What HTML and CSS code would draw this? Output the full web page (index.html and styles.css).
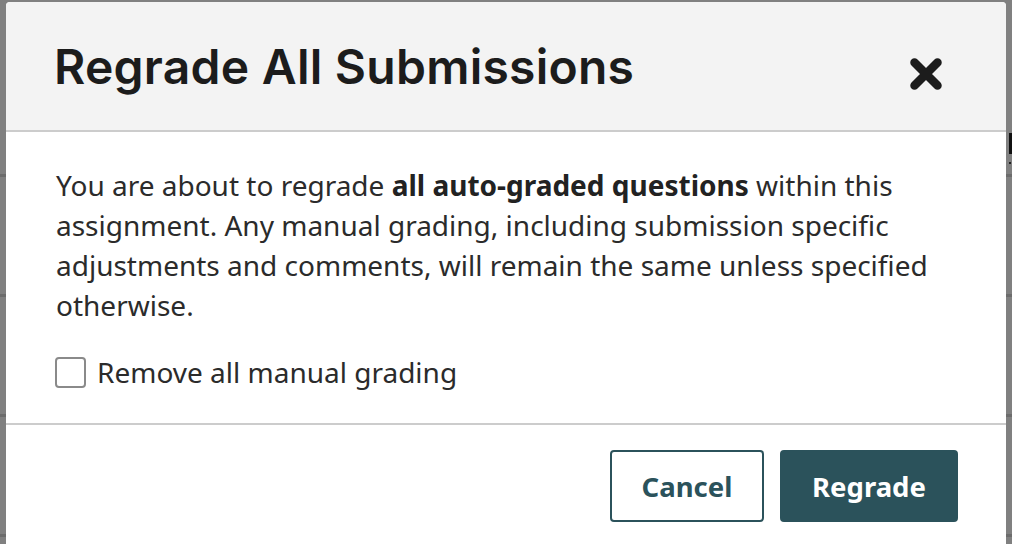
FILE: index.html
```html
<!DOCTYPE html>
<html lang="en">
<head>
<meta charset="utf-8">
<title>Regrade All Submissions</title>
<link rel="stylesheet" href="styles.css">
</head>
<body>
<div class="backdrop">
  <span class="edge-mark"></span>
  <span class="edge-dot"></span>
</div>
<div class="overlay">
  <div class="modal" role="dialog" aria-labelledby="modal-title">
    <header class="modal-header">
      <h1 id="modal-title" class="modal-title">Regrade All Submissions</h1>
      <button class="close-btn" aria-label="Close">
        <svg width="36" height="36" viewBox="0 0 36 36" aria-hidden="true">
          <path d="M6.5 6.5 L29.5 29.5 M29.5 6.5 L6.5 29.5" stroke="#1c1c1c" stroke-width="8.5" stroke-linecap="round"/>
        </svg>
      </button>
    </header>
    <div class="modal-body">
      <p class="desc">You are about to regrade <strong>all auto-graded questions</strong> within this assignment. Any manual grading, including submission specific adjustments and comments, will remain the same unless specified otherwise.</p>
      <label class="check-row">
        <span class="checkbox"></span>
        <span class="check-label">Remove all manual grading</span>
      </label>
    </div>
    <footer class="modal-footer">
      <button class="btn btn-secondary">Cancel</button>
      <button class="btn btn-primary">Regrade</button>
    </footer>
  </div>
</div>
</body>
</html>
```
FILE: styles.css
```css
* { box-sizing: border-box; }

html, body {
  margin: 0;
  height: 100%;
}

body {
  background-color: #808080;
  background-image: repeating-linear-gradient(
    to bottom,
    #6c6c6c 0px,
    #6c6c6c 3px,
    transparent 3px,
    transparent 120px
  );
  background-size: 100% 500px;
  background-position: 0 174px;
  background-repeat: no-repeat;
  overflow: hidden;
  font-family: "Noto Sans", "Open Sans", sans-serif;
}

.backdrop {
  height: 100%;
  position: relative;
}

.edge-mark {
  position: absolute;
  right: 0;
  top: 133px;
  width: 3px;
  height: 21px;
  background: #111;
}

.edge-dot {
  position: absolute;
  right: 1px;
  top: 162px;
  width: 2px;
  height: 2px;
  background: #222;
}

.overlay {
  position: fixed;
  inset: 0;
  padding: 2px 6px 0 6px;
}

.modal {
  background: #ffffff;
  border-radius: 4px 4px 0 0;
  overflow: hidden;
  height: 600px;
}

.modal-header {
  background: #f3f3f3;
  border-bottom: 2px solid #cccccc;
  height: 130px;
  display: flex;
  align-items: center;
  justify-content: space-between;
  padding: 0 62px 0 48px;
}

.modal-title {
  margin: 0;
  font-family: "Inter", "Lato", sans-serif;
  font-weight: 600;
  font-size: 48px;
  color: #1c1c1c;
  letter-spacing: 0.25px;
}

.close-btn {
  border: 0;
  background: transparent;
  padding: 0;
  display: flex;
  margin-top: 16px;
  cursor: pointer;
}

.modal-body {
  padding: 33px 48px 31px 50px;
  border-bottom: 2px solid #cccccc;
}

.desc {
  margin: 0;
  font-size: 28px;
  line-height: 40px;
  color: #2b2b2b;
}

.desc strong {
  font-weight: 700;
  color: #222;
}

.check-row {
  margin-top: 27px;
  display: flex;
  align-items: center;
  gap: 11px;
}

.checkbox {
  width: 31px;
  height: 31px;
  border: 2px solid #8a8a8a;
  border-radius: 4px;
  background: #fff;
  flex: none;
  margin-left: -1px;
}

.check-label {
  font-size: 28px;
  line-height: 40px;
  color: #2b2b2b;
}

.modal-footer {
  display: flex;
  justify-content: flex-end;
  gap: 16px;
  padding: 25px 48px 0 50px;
}

.btn {
  height: 72px;
  border-radius: 4px;
  font-family: "Noto Sans", "Open Sans", sans-serif;
  font-weight: 700;
  font-size: 27.5px;
  padding: 0 20px;
  cursor: pointer;
}

.btn-secondary {
  background: #ffffff;
  border: 2px solid #2b525b;
  color: #2b525b;
  width: 154px;
}

.btn-primary {
  background: #2b525b;
  border: 2px solid #2b525b;
  color: #ffffff;
  width: 178px;
}
```
